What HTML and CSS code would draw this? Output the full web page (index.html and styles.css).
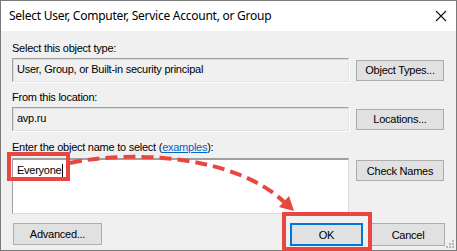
FILE: index.html
```html
<!DOCTYPE html>
<html>
<head>
<meta charset="utf-8">
<link rel="stylesheet" href="styles.css">
</head>
<body>
<div class="window">
  <div class="titlebar">
    <span class="title">Select User, Computer, Service Account, or Group</span>
    <svg class="close" width="12" height="12" viewBox="0 0 12 12"><path d="M1 1 L11 11 M11 1 L1 11" stroke="#111" stroke-width="1.1" fill="none"/></svg>
  </div>
  <div class="content">
    <div class="label l1">Select this object type:</div>
    <div class="row">
      <div class="field">User, Group, or Built-in security principal</div>
      <div class="btn">Object Types...</div>
    </div>
    <div class="label l2">From this location:</div>
    <div class="row">
      <div class="field">avp.ru</div>
      <div class="btn">Locations...</div>
    </div>
    <div class="label l3"><u>E</u>nter the object name to select (<span class="link">examples</span>):</div>
    <div class="row top">
      <div class="area">Everyone<span class="caret"></span></div>
      <div class="btn btn-check">Check Names</div>
    </div>
    <div class="bottom">
      <div class="btn btn-adv">Advanced...</div>
      <div class="spacer"></div>
      <div class="btn btn-ok">OK</div>
      <div class="btn btn-cancel">Cancel</div>
    </div>
  </div>
  <svg class="grip" width="9" height="9" viewBox="0 0 9 9">
    <rect x="7" y="1" width="2" height="2" fill="#b9b9b9"/>
    <rect x="4" y="4" width="2" height="2" fill="#b9b9b9"/>
    <rect x="7" y="4" width="2" height="2" fill="#b9b9b9"/>
    <rect x="1" y="7" width="2" height="2" fill="#b9b9b9"/>
    <rect x="4" y="7" width="2" height="2" fill="#b9b9b9"/>
    <rect x="7" y="7" width="2" height="2" fill="#b9b9b9"/>
  </svg>
  <div class="hl hl-everyone"></div>
  <div class="hl hl-ok"></div>
  <svg class="arrow" width="457" height="251" viewBox="0 0 457 251">
    <path d="M70 163 C130 150 235 155 284 202" stroke="#e8473f" stroke-width="4" fill="none" stroke-dasharray="12 6"/>
    <polygon points="294,211 279,207 289,196" fill="#e8473f"/>
  </svg>
</div>
</body>
</html>
```
FILE: styles.css
```css
html, body {
  margin: 0;
  padding: 0;
}
body {
  width: 457px;
  height: 251px;
  overflow: hidden;
  background: #f0f0f0;
}
.window {
  position: relative;
  box-sizing: border-box;
  width: 457px;
  height: 251px;
  border: 1px solid #7a7a7a;
  background: #f0f0f0;
  font-family: "Liberation Sans", Arial, sans-serif;
  font-size: 11px;
  letter-spacing: -0.25px;
  color: #000;
}
.titlebar {
  height: 30px;
  background: #fff;
  display: flex;
  align-items: center;
  padding-left: 8px;
  padding-right: 9px;
}
.title {
  font-family: "Noto Sans", "Open Sans", sans-serif;
  font-size: 12px;
  letter-spacing: -0.25px;
  color: #000;
  flex: 1;
  padding-bottom: 1px;
}
.close {
  display: block;
  margin-bottom: 1px;
}
.content {
  padding: 11px 11px 0 11px;
}
.label {
  height: 13px;
  line-height: 13px;
  margin-bottom: 3px;
  white-space: nowrap;
}
.l2 { margin-top: 9px; }
.l3 { margin-top: 10px; margin-bottom: 4px; }
.link {
  color: #0066cc;
  text-decoration: underline;
}
.row {
  display: flex;
  align-items: center;
  gap: 7px;
}
.row.top {
  align-items: flex-start;
}
.field {
  box-sizing: border-box;
  width: 337px;
  height: 24px;
  line-height: 21px;
  padding-left: 4px;
  border-top: 1px solid #a0a0a0;
  border-left: 1px solid #a0a0a0;
  border-right: 1px solid #e3e3e3;
  border-bottom: 1px solid #e3e3e3;
  box-shadow: inset 1px 1px 0 #dcdcdc, 1px 1px 0 #fff;
  background: #f0f0f0;
  white-space: nowrap;
}
.area {
  box-sizing: border-box;
  width: 337px;
  height: 56px;
  padding: 3px 0 0 4px;
  line-height: 14px;
  background: #fff;
  border-top: 2px solid #a0a0a0;
  border-left: 1px solid #a0a0a0;
  border-right: 1px solid #dcdcdc;
  border-bottom: 1px solid #dcdcdc;
}
.caret {
  display: inline-block;
  width: 1px;
  height: 13px;
  background: #000;
  vertical-align: -3px;
  margin-left: 1px;
}
.btn {
  box-sizing: border-box;
  width: 88px;
  height: 21px;
  background: #e1e1e1;
  border: 1px solid #adadad;
  display: flex;
  align-items: center;
  justify-content: center;
  white-space: nowrap;
  flex: none;
}
.btn-check {
  margin-top: 2px;
}
.bottom {
  display: flex;
  align-items: flex-start;
  margin-top: 9px;
  padding-left: 1px;
}
.spacer { flex: 1; }
.btn-adv {
  width: 89px;
  height: 22px;
}
.btn-ok {
  width: 73px;
  height: 23px;
  border: 2px solid #0078d7;
  margin-right: 8px;
}
.btn-cancel {
  width: 74px;
  height: 23px;
}
.grip {
  position: absolute;
  right: 2px;
  bottom: 2px;
}
.hl {
  position: absolute;
  box-sizing: border-box;
  border: 4px solid #e8473f;
}
.hl-everyone {
  left: 6px;
  top: 151px;
  width: 63px;
  height: 29px;
}
.hl-ok {
  left: 281px;
  top: 211px;
  width: 90px;
  height: 39px;
}
.arrow {
  position: absolute;
  left: -1px;
  top: -1px;
  pointer-events: none;
}
```
